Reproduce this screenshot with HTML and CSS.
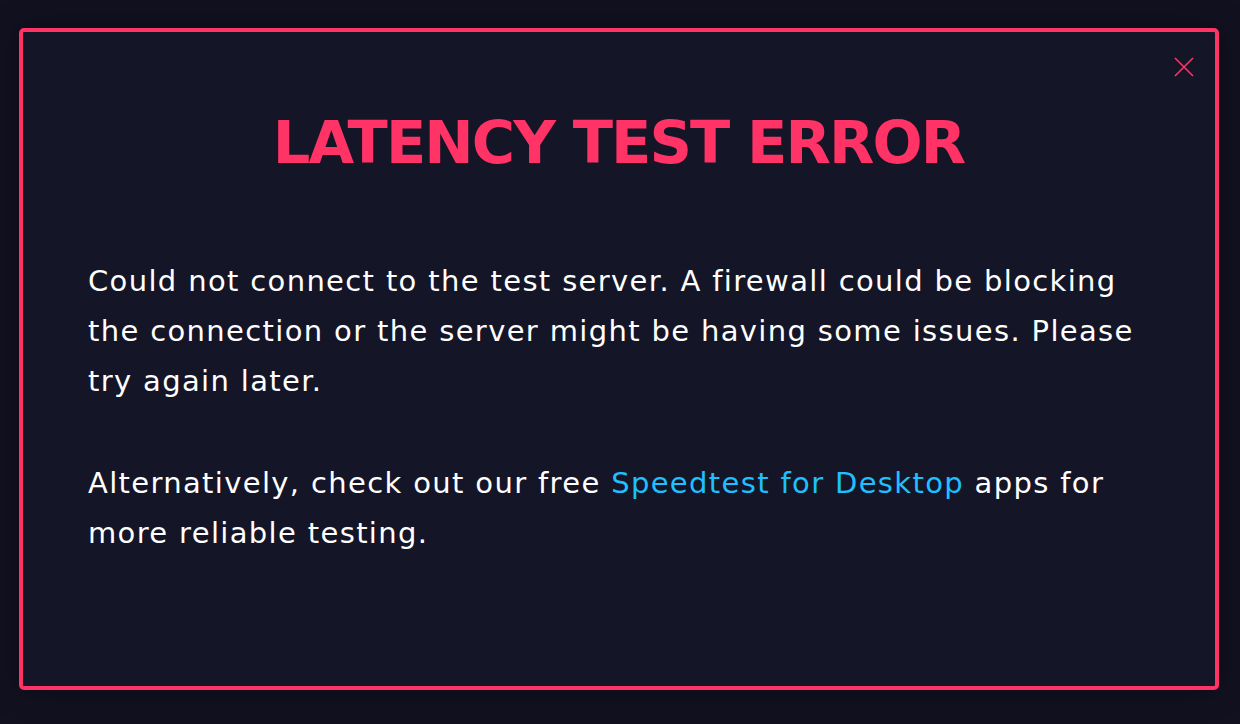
FILE: index.html
```html
<!DOCTYPE html>
<html>
<head>
<meta charset="utf-8">
<link rel="stylesheet" href="styles.css">
</head>
<body>
<div class="modal">
  <button class="close" aria-label="Close">
    <svg width="20" height="20" viewBox="0 0 20 20"><path d="M1 1 L19 19 M19 1 L1 19" stroke="#ff3366" stroke-width="1.6" fill="none"/></svg>
  </button>
  <h1 class="title">LATENCY TEST ERROR</h1>
  <div class="body">
    <p class="para">Could not connect to the test server. A firewall could be blocking the connection or the server might be having some issues. Please try again later.</p>
    <p class="para">Alternatively, check out our free <a class="link" href="#">Speedtest for Desktop</a> apps for more reliable testing.</p>
  </div>
</div>
</body>
</html>
```
FILE: styles.css
```css
html, body {
  margin: 0;
  padding: 0;
  background: #111120;
  height: 100%;
}
body {
  padding: 28px 21px 34px 19px;
  box-sizing: border-box;
  font-family: "DejaVu Sans", sans-serif;
}
.modal {
  position: relative;
  box-sizing: border-box;
  width: 1200px;
  height: 662px;
  border: 4px solid #ff3366;
  border-radius: 5px;
  background: #151528;
  box-shadow: 0 0 30px rgba(0,0,0,0.35);
  padding: 0 55px 0 65px;
}
.close {
  position: absolute;
  top: 25px;
  right: 21px;
  width: 20px;
  height: 20px;
  padding: 0;
  border: none;
  background: none;
  display: flex;
}
.title {
  margin: 76px 0 0;
  padding-right: 11px;
  text-align: center;
  color: #ff3366;
  font-size: 59px;
  line-height: 70px;
  font-weight: 700;
  letter-spacing: -1.9px;
}
.body {
  margin-top: 78px;
}
.para {
  margin: 0 0 52px;
  color: #ffffff;
  font-size: 29px;
  line-height: 50px;
  letter-spacing: 1.35px;
}
.link {
  color: #1ec0ff;
  text-decoration: none;
}
```
